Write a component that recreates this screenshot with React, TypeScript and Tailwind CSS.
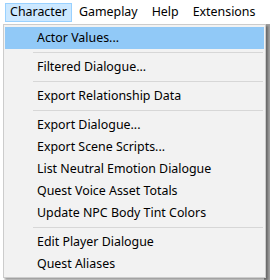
import React from "react";

const groups: string[][] = [
  ["Actor Values..."],
  ["Filtered Dialogue..."],
  ["Export Relationship Data"],
  [
    "Export Dialogue...",
    "Export Scene Scripts...",
    "List Neutral Emotion Dialogue",
    "Quest Voice Asset Totals",
    "Update NPC Body Tint Colors",
  ],
  ["Edit Player Dialogue", "Quest Aliases"],
];

export default function App() {
  return (
    <div
      className="relative w-[270px] h-[280px] overflow-hidden bg-[#f0f0f0] text-black"
      style={{ fontFamily: '"Noto Sans", "Open Sans", sans-serif' }}
    >
      {/* menu bar */}
      <div className="flex h-[24px] items-center bg-white pl-[5px] text-[12.4px]">
        <div className="flex h-[19px] w-[67px] items-center justify-center border border-[#99d1ff] bg-[#cce8ff]">
          Character
        </div>
        <div className="px-[7px]">Gameplay</div>
        <div className="px-[7px]">Help</div>
        <div className="px-[7px]">Extensions</div>
      </div>
      {/* background behind */}
      <div className="flex h-[256px]">
        <div className="w-[4px] bg-white"></div>
        <div className="flex-1"></div>
        <div className="w-[6px] bg-[#a0a0a0]"></div>
      </div>
      {/* dropdown */}
      <div className="absolute left-[3px] top-[24px] w-[263px] border border-[#cccccc] bg-[#f2f2f2] py-[2px] px-[1px] text-[12.4px] shadow-[2px_2px_2px_rgba(0,0,0,0.35)]">
        {groups.map((g, gi) => (
          <div key={gi}>
            {gi > 0 && (
              <div className="flex h-[7px] items-center pl-[28px] pr-[1px]">
                <div className="h-px w-full bg-[#d7d7d7]"></div>
              </div>
            )}
            {g.map((t) => (
              <div
                key={t}
                className={
                  "flex h-[22px] items-center pl-[32px] " +
                  (t === "Actor Values..." ? "bg-[#91c9f7]" : "")
                }
              >
                {t}
              </div>
            ))}
          </div>
        ))}
      </div>
    </div>
  );
}
